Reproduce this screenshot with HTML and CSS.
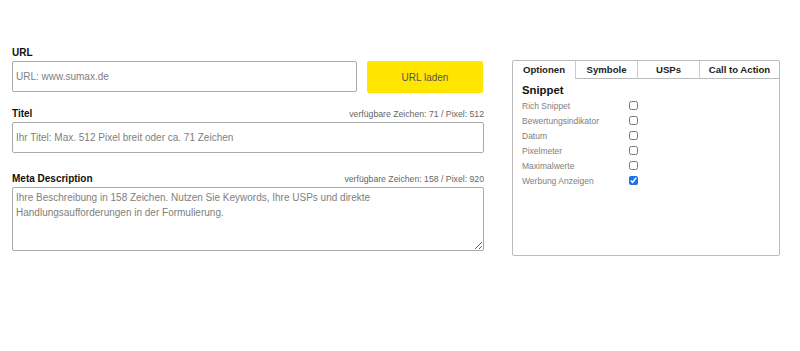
FILE: index.html
```html
<!DOCTYPE html>
<html lang="de">
<head>
<meta charset="utf-8">
<title>Snippet Generator</title>
<link rel="stylesheet" href="styles.css">
</head>
<body>
<div class="page">
  <div class="left">
    <div class="field">
      <div class="label-row"><label class="label">URL</label></div>
      <div class="url-row">
        <input class="input url-input" type="text" placeholder="URL: www.sumax.de">
        <button class="btn">URL laden</button>
      </div>
    </div>
    <div class="field">
      <div class="label-row"><label class="label">Titel</label><span class="counter">verfügbare Zeichen: 71 / Pixel: 512</span></div>
      <input class="input" type="text" placeholder="Ihr Titel: Max. 512 Pixel breit oder ca. 71 Zeichen">
    </div>
    <div class="field meta">
      <div class="label-row"><label class="label">Meta Description</label><span class="counter">verfügbare Zeichen: 158 / Pixel: 920</span></div>
      <textarea class="input textarea" placeholder="Ihre Beschreibung in 158 Zeichen. Nutzen Sie Keywords, Ihre USPs und direkte Handlungsaufforderungen in der Formulierung."></textarea>
    </div>
  </div>
  <div class="panel">
    <div class="tabs">
      <div class="tab active">Optionen</div>
      <div class="tab">Symbole</div>
      <div class="tab">USPs</div>
      <div class="tab wide">Call to Action</div>
    </div>
    <div class="panel-body">
      <div class="heading">Snippet</div>
      <div class="opt"><span class="opt-label">Rich Snippet</span><input class="cb" type="checkbox"></div>
      <div class="opt"><span class="opt-label">Bewertungsindikator</span><input class="cb" type="checkbox"></div>
      <div class="opt"><span class="opt-label">Datum</span><input class="cb" type="checkbox"></div>
      <div class="opt"><span class="opt-label">Pixelmeter</span><input class="cb" type="checkbox"></div>
      <div class="opt"><span class="opt-label">Maximalwerte</span><input class="cb" type="checkbox"></div>
      <div class="opt"><span class="opt-label">Werbung Anzeigen</span><input class="cb" type="checkbox" checked></div>
    </div>
  </div>
</div>
</body>
</html>
```
FILE: styles.css
```css
* { box-sizing: border-box; }
html, body { margin: 0; padding: 0; background: #fff; }
body { font-family: "Liberation Sans", Arial, sans-serif; color: #222; font-size: 10px; }
.page {
  display: flex;
  align-items: flex-start;
  gap: 28px;
  padding: 46px 0 0 12px;
}
.left { width: 472px; display: flex; flex-direction: column; }
.field { display: flex; flex-direction: column; }
.field + .field { margin-top: 14px; }
.field.meta { margin-top: 19px; }
.label-row {
  display: flex;
  justify-content: space-between;
  align-items: flex-end;
  height: 13px;
  margin-bottom: 2px;
}
.label { font-weight: bold; font-size: 10px; line-height: 13px; color: #111; }
.counter { font-size: 8.7px; color: #666; line-height: 12px; }
.url-row { display: flex; gap: 10px; }
.input {
  font-family: "Liberation Sans", Arial, sans-serif;
  font-size: 10px;
  border: 1px solid #aaa;
  border-radius: 2px;
  height: 31px;
  padding: 0 3px;
  width: 100%;
  color: #222;
  background: #fff;
  outline: none;
}
.input::placeholder { color: #808080; }
.url-input { width: 345px; }
.btn {
  width: 116px;
  height: 32px;
  background: #ffe500;
  border: none;
  border-radius: 2px;
  font-family: "Liberation Sans", Arial, sans-serif;
  font-size: 10px;
  color: #555;
  padding-top: 2px;
}
.textarea {
  height: 64px;
  padding: 2px 3px;
  line-height: 15px;
  resize: vertical;
}
.panel {
  margin-top: 14px;
  width: 268px;
  height: 196px;
  border: 1px solid #bbb;
  border-radius: 2px;
  display: flex;
  flex-direction: column;
}
.tabs { display: flex; height: 18px; }
.tab {
  width: 62px;
  text-align: center;
  font-weight: bold;
  font-size: 9.6px;
  line-height: 17px;
  color: #222;
  border-bottom: 1px solid #bbb;
  border-left: 1px solid #ccc;
}
.tab.active { border-bottom: none; border-left: none; }
.tab.wide { flex: 1; }
.panel-body { padding: 4px 9px; }
.heading { font-weight: bold; font-size: 11.3px; line-height: 14px; color: #111; margin-bottom: 1px; }
.opt { display: flex; align-items: center; height: 15px; }
.opt-label { width: 107px; color: #808080; font-size: 8.5px; }
.cb { width: 9px; height: 9px; margin: 0; accent-color: #1a73e8; }
```
